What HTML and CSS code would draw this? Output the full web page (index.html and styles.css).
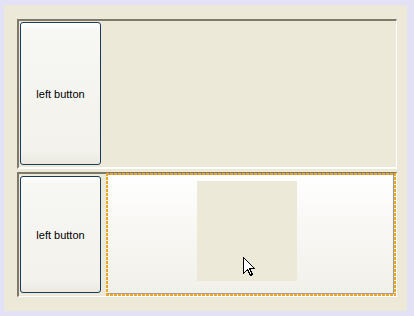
FILE: index.html
```html
<!DOCTYPE html>
<html>
<head>
<meta charset="utf-8">
<link rel="stylesheet" href="styles.css">
</head>
<body>
<div class="frame">
  <div class="panel panel-top">
    <div class="btn btn-tall">left button</div>
    <div class="area"></div>
  </div>
  <div class="panel panel-bottom">
    <div class="btn btn-short">left button</div>
    <div class="focus">
      <div class="square"></div>
      <svg class="cursor" width="12" height="20" viewBox="0 0 12 20" shape-rendering="crispEdges">
        <path d="M0.5 0.5 L0.5 16.5 L4.5 12.5 L7.5 18.5 L9.5 17.5 L6.5 11.5 L11.5 11.5 Z" fill="#ffffff" stroke="#000000" stroke-width="1" stroke-linejoin="miter"/>
      </svg>
    </div>
  </div>
</div>
</body>
</html>
```

FILE: styles.css
```css
html, body {
  margin: 0;
  padding: 0;
}
body {
  background: #e2e1f6;
  width: 414px;
  height: 316px;
  overflow: hidden;
  font-family: "Liberation Sans", Arial, sans-serif;
}
.frame {
  margin: 5px 7px 5px 4px;
  width: 403px;
  height: 306px;
  box-sizing: border-box;
  background: #ece9d8;
  padding: 14px 10px 14px 13px;
  display: flex;
  flex-direction: column;
  gap: 3px;
}
.panel {
  width: 380px;
  box-sizing: border-box;
  display: flex;
  border-style: solid;
  border-color: #7d7a6b #ffffff #ffffff #7d7a6b;
  background: #ece9d8;
}
.panel-top {
  height: 150px;
  border-width: 2px 1px 2px 2px;
  padding: 1px 0 2px 1px;
  gap: 3px;
}
.panel-bottom {
  height: 125px;
  border-width: 2px 1px 1px 2px;
  padding: 0;
  align-items: flex-start;
}
.btn {
  width: 81px;
  box-sizing: border-box;
  border: 1px solid #1b3b5c;
  border-radius: 3px;
  background: linear-gradient(180deg, #ffffff 0%, #f7f7f3 6%, #f3f2ed 90%, #ebe9e0 100%);
  display: flex;
  align-items: center;
  justify-content: center;
  font-size: 11px;
  color: #000;
  flex: none;
}
.btn-tall {
  height: 143px;
}
.btn-short {
  height: 117px;
  margin: 2px 0 0 1px;
}
.area {
  flex: 1;
  background: #ece9d8;
}
.focus {
  position: relative;
  width: 290px;
  height: 123px;
  margin: -1px 0 0 5px;
  box-sizing: border-box;
  border: 2px solid transparent;
  padding: 6px 0 0 89px;
  background:
    repeating-linear-gradient(90deg, #eca52a 0 3px, #8d8a7c 3px 4px) top / 100% 2px no-repeat border-box,
    repeating-linear-gradient(90deg, #eca52a 0 3px, #faf9f5 3px 4px) bottom / 100% 2px no-repeat border-box,
    repeating-linear-gradient(180deg, #eca52a 0 3px, #faf9f5 3px 4px) left / 2px 100% no-repeat border-box,
    repeating-linear-gradient(180deg, #eca52a 0 3px, #faf9f5 3px 4px) right / 2px 100% no-repeat border-box,
    linear-gradient(180deg, #ffffff 0%, #f9f8f5 40%, #f2f0e9 100%) padding-box;
  box-shadow: inset -1px -1px 0 #a19e90;
}
.square {
  width: 100px;
  height: 100px;
  background: #ece9d8;
}
.cursor {
  position: absolute;
  left: 135px;
  top: 82px;
}
```
